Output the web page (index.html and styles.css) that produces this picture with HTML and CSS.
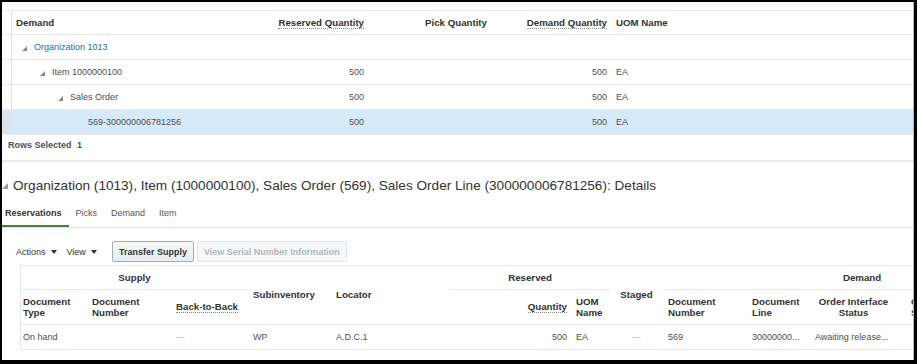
FILE: index.html
```html
<!DOCTYPE html>
<html lang="en">
<head>
    <meta charset="UTF-8">
    <title>Reservations - Details</title>
    <link rel="stylesheet" href="styles.css">
</head>
<body>
    <div class="frame">
        <table class="tree-table">
            <colgroup>
                <col class="c-sel">
                <col class="c-demand">
                <col class="c-resv">
                <col class="c-pick">
                <col class="c-dqty">
                <col>
            </colgroup>
            <thead>
                <tr>
                    <th class="sel"></th>
                    <th>Demand</th>
                    <th class="num"><span class="sortable">Reserved Quantity</span></th>
                    <th class="num">Pick Quantity</th>
                    <th class="num"><span class="sortable">Demand Quantity</span></th>
                    <th>UOM Name</th>
                </tr>
            </thead>
            <tbody>
                <tr>
                    <td class="sel"></td>
                    <td><div class="node lvl-0"><span class="twisty"></span><span class="link">Organization 1013</span></div></td>
                    <td class="num"></td>
                    <td class="num"></td>
                    <td class="num"></td>
                    <td></td>
                </tr>
                <tr>
                    <td class="sel"></td>
                    <td><div class="node lvl-1"><span class="twisty"></span>Item 1000000100</div></td>
                    <td class="num">500</td>
                    <td class="num"></td>
                    <td class="num">500</td>
                    <td>EA</td>
                </tr>
                <tr>
                    <td class="sel"></td>
                    <td><div class="node lvl-2"><span class="twisty"></span>Sales Order</div></td>
                    <td class="num">500</td>
                    <td class="num"></td>
                    <td class="num">500</td>
                    <td>EA</td>
                </tr>
                <tr class="selected">
                    <td class="sel"></td>
                    <td><div class="node lvl-3"><span class="twisty leaf"></span>569-300000006781256</div></td>
                    <td class="num">500</td>
                    <td class="num"></td>
                    <td class="num">500</td>
                    <td>EA</td>
                </tr>
            </tbody>
        </table>

        <div class="rows-selected">Rows Selected <span class="count">1</span></div>

        <div class="divider"></div>

        <div class="detail-title">
            <span class="title-twisty"></span>
            Organization (1013), Item (1000000100), Sales Order (569), Sales Order Line (300000006781256): Details
        </div>

        <div class="tabs">
            <span class="tab active">Reservations</span>
            <span class="tab">Picks</span>
            <span class="tab">Demand</span>
            <span class="tab">Item</span>
        </div>

        <div class="toolbar">
            <span class="menu">Actions <span class="caret"></span></span>
            <span class="menu">View <span class="caret"></span></span>
            <button class="btn">Transfer Supply</button>
            <button class="btn" disabled>View Serial Number Information</button>
        </div>

        <table class="detail-table">
            <colgroup>
                <col class="d1"><col class="d2"><col class="d3"><col class="d4">
                <col class="d5"><col class="d6"><col class="d7"><col class="d8">
                <col class="d9"><col class="d10"><col class="d11"><col class="d12">
            </colgroup>
            <thead>
                <tr class="group-row">
                    <th colspan="3" class="group">Supply</th>
                    <th rowspan="2">Subinventory</th>
                    <th rowspan="2">Locator</th>
                    <th colspan="2" class="group">Reserved</th>
                    <th rowspan="2" class="center">Staged</th>
                    <th colspan="4" class="group">Demand</th>
                </tr>
                <tr class="sub-row">
                    <th class="first">Document<br>Type</th>
                    <th>Document<br>Number</th>
                    <th><span class="sortable">Back-to-Back</span></th>
                    <th class="num"><span class="sortable">Quantity</span></th>
                    <th class="uom">UOM<br>Name</th>
                    <th>Document<br>Number</th>
                    <th>Document<br>Line</th>
                    <th class="ois">Order Interface<br>Status</th>
                    <th>Order<br>Status</th>
                </tr>
            </thead>
            <tbody>
                <tr>
                    <td class="first">On hand</td>
                    <td></td>
                    <td><span class="dash">&mdash;</span></td>
                    <td>WP</td>
                    <td>A.D.C.1</td>
                    <td class="num">500</td>
                    <td class="uom">EA</td>
                    <td class="center"><span class="dash">&mdash;</span></td>
                    <td>569</td>
                    <td>30000000...</td>
                    <td>Awaiting release...</td>
                    <td></td>
                </tr>
            </tbody>
        </table>
    </div>
</body>
</html>
```

FILE: styles.css
```css
body {
    margin: 0;
    background-color: #000;
    font-family: "Liberation Sans", Arial, sans-serif;
    font-size: 9px;
    color: #4f4f4f;
}

.frame {
    margin: 2px 0 0 2px;
    width: 911px;
    height: 358px;
    background-color: #fff;
    border-right: 1px solid #b5b5b5;
    overflow: hidden;
}

/* tabla de arbol superior */
.tree-table {
    width: 911px;
    margin-top: 8px;
    table-layout: fixed;
    border-spacing: 0;
    border-top: 1px solid #e6e9ec;
}

.c-sel { width: 10px; }
.c-demand { width: 258px; }
.c-resv { width: 99px; }
.c-pick { width: 123px; }
.c-dqty { width: 120px; }

.tree-table th,
.tree-table td {
    height: 24px;
    padding: 0 5px 0 4px;
    border-bottom: 1px solid #e6e9ec;
    text-align: left;
    white-space: nowrap;
    line-height: 12px;
}

.tree-table th {
    height: 23px;
    font-size: 9.7px;
    font-weight: bold;
    color: #333;
}

.tree-table .sel {
    padding: 0;
    border-right: 1px solid #dfe3e7;
}

.tree-table .num {
    text-align: right;
}

.tree-table tr.selected td {
    background-color: #d7eafa;
}

.tree-table tr.selected td.sel {
    background-color: #dde5ec;
}

.sortable {
    display: inline-block;
    line-height: 11px;
    border-bottom: 1px dotted #8a8a8a;
}

.node {
    display: flex;
    align-items: center;
}

.lvl-0 { padding-left: 6px; }
.lvl-1 { padding-left: 24px; }
.lvl-2 { padding-left: 42px; }
.lvl-3 { padding-left: 60px; }

.twisty {
    width: 0;
    height: 0;
    margin: 3px 7px 0 0;
    border-left: 5px solid transparent;
    border-bottom: 5px solid #8a8a8a;
}

.twisty.leaf {
    visibility: hidden;
}

.link {
    color: #2b6c9e;
}

.rows-selected {
    height: 25px;
    line-height: 20px;
    padding-left: 6px;
    font-weight: bold;
    color: #505050;
}

.rows-selected .count {
    margin-left: 3px;
}

.divider {
    height: 2px;
    background-color: #e9ecef;
}

/* encabezado de detalle */
.detail-title {
    display: flex;
    align-items: center;
    padding: 14px 0 8px 0;
    line-height: 20px;
    font-size: 13.6px;
    color: #333;
}

.title-twisty {
    width: 0;
    height: 0;
    margin: 0 5px 0 0;
    border-left: 6px solid transparent;
    border-bottom: 6px solid #9a9a9a;
}

.tabs {
    display: flex;
    height: 23px;
    border-bottom: 1px solid #e2e5e8;
}

.tab {
    height: 21px;
    padding: 0 7px;
    line-height: 18px;
    color: #555;
}

.tab.active {
    padding-left: 3px;
    border-bottom: 2px solid #4e7c3c;
    font-weight: bold;
    color: #333;
}

.toolbar {
    display: flex;
    align-items: center;
    padding: 13px 0 3px 14px;
    height: 21px;
}

.menu {
    display: flex;
    align-items: center;
    margin-right: 10px;
    color: #333;
}

.menu + .menu {
    margin-right: 15px;
}

.caret {
    width: 0;
    height: 0;
    margin-left: 5px;
    border-left: 3px solid transparent;
    border-right: 3px solid transparent;
    border-top: 4px solid #333;
}

.btn {
    height: 21px;
    margin: 0 3px 0 0;
    padding: 0 6px;
    font-family: inherit;
    font-size: 9px;
    font-weight: bold;
    color: #333;
    background: linear-gradient(#f8f9fa, #e8ecef);
    border: 1px solid #a3abb3;
    border-radius: 2px;
}

.btn:disabled {
    color: #b3b7bb;
    background: #f6f7f8;
    border-color: #e2e5e8;
}

/* tabla de reservas */
.detail-table {
    width: 1041px;
    margin-left: 18px;
    table-layout: fixed;
    border-spacing: 0;
    border-top: 1px solid #e6e9ec;
    border-left: 1px solid #e6e9ec;
}

.d1 { width: 66px; }
.d2 { width: 84px; }
.d3 { width: 77px; }
.d4 { width: 83px; }
.d5 { width: 119px; }
.d6 { width: 122px; }
.d7 { width: 38px; }
.d8 { width: 53px; }
.d9 { width: 84px; }
.d10 { width: 63px; }
.d11 { width: 96px; }
.d12 { width: 155px; }

.detail-table th,
.detail-table td {
    padding: 0 5px;
    text-align: left;
    vertical-align: middle;
    white-space: nowrap;
    border-bottom: 1px solid #e6e9ec;
}

.detail-table th {
    font-size: 9.7px;
    font-weight: bold;
    color: #333;
    line-height: 11.5px;
}

.detail-table .group-row th {
    height: 23px;
}

.detail-table .group {
    text-align: center;
}

.detail-table .sub-row th {
    height: 34px;
}

.detail-table td {
    height: 24px;
    line-height: 12px;
}

.detail-table .first {
    padding-left: 2px;
}

.detail-table .num {
    text-align: right;
}

.detail-table .uom {
    padding-left: 4px;
}

.detail-table .center {
    text-align: center;
}

.detail-table .ois {
    text-align: center;
    padding-right: 14px;
}

.dash {
    color: #b0b0b0;
}
```
